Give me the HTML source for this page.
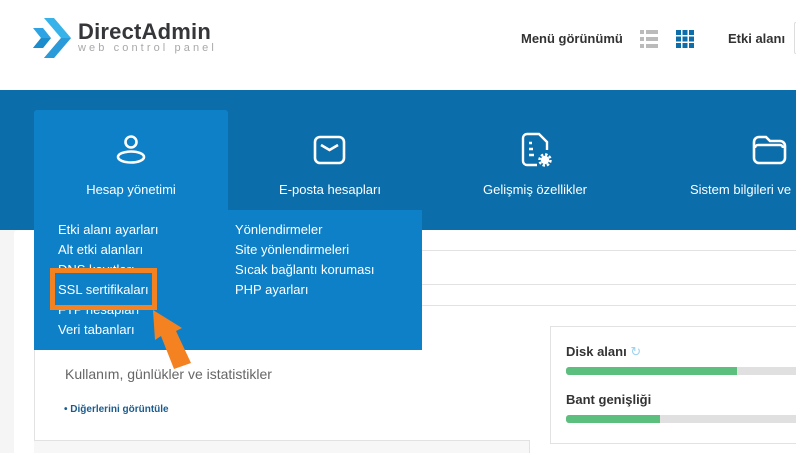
<!DOCTYPE html>
<html><head><meta charset="utf-8"><style>
*{margin:0;padding:0;box-sizing:border-box}
body{width:796px;height:453px;overflow:hidden;background:#f5f5f5;font-family:"Liberation Sans","DejaVu Sans",sans-serif;position:relative}
.abs{position:absolute}
.hdr{left:0;top:0;width:796px;height:90px;background:#fff}
.band{left:0;top:90px;width:796px;height:140px;background:#0b6daa}
.tab{left:34px;top:110px;width:194px;height:100px;background:#0d80c8;border-radius:3px 3px 0 0}
.drop{left:34px;top:210px;width:388px;height:140px;background:#0d80c8}
.lbl{color:#fff;font-size:13px;text-align:center}
.mi{color:#fff;font-size:13px;line-height:20px}
</style></head><body>
<div class="abs hdr"></div>
<svg class="abs" style="left:30px;top:16px" width="45" height="45" viewBox="0 0 45 45">
<polygon points="3,12 13,12 21,22 13,32 3,32 11,22" fill="#2ea3e3"/>
<polygon points="14,2 24,2 41,22 24,42 14,42 31,22" fill="#38b3ea"/>
<polygon points="11,22 21,22 13,32 3,32" fill="#1b8ccc"/>
<polygon points="31,22 41,22 24,42 14,42" fill="#2a9ad8"/>
</svg>
<div class="abs" style="left:78px;top:19px;font-size:22px;font-weight:bold;color:#35363a;letter-spacing:0.2px">DirectAdmin</div>
<div class="abs" style="left:78px;top:42px;font-size:11px;color:#a9a9a9;letter-spacing:3.1px">web control panel</div>
<div class="abs" style="left:521px;top:31px;font-size:13px;font-weight:bold;color:#333">Menü görünümü</div>
<svg class="abs" style="left:640px;top:30px" width="18" height="18"><g fill="#bbb"><rect x="0" y="0" width="4" height="4"/><rect x="6" y="0" width="12" height="4"/><rect x="0" y="7" width="4" height="4"/><rect x="6" y="7" width="12" height="4"/><rect x="0" y="14" width="4" height="4"/><rect x="6" y="14" width="12" height="4"/></g></svg>
<svg class="abs" style="left:676px;top:30px" width="18" height="18"><g fill="#0b6daa"><rect x="0" y="0" width="5" height="5"/><rect x="6.5" y="0" width="5" height="5"/><rect x="13" y="0" width="5" height="5"/><rect x="0" y="6.5" width="5" height="5"/><rect x="6.5" y="6.5" width="5" height="5"/><rect x="13" y="6.5" width="5" height="5"/><rect x="0" y="13" width="5" height="5"/><rect x="6.5" y="13" width="5" height="5"/><rect x="13" y="13" width="5" height="5"/></g></svg>
<div class="abs" style="left:728px;top:31px;font-size:13px;font-weight:bold;color:#333">Etki alanı</div>
<div class="abs" style="left:794px;top:22px;width:4px;height:32px;border:1px solid #ddd;border-radius:3px"></div>

<div class="abs band"></div>
<div class="abs tab"></div>
<svg class="abs" style="left:114px;top:132px" width="34" height="34" viewBox="0 0 34 34" fill="none" stroke="#fff" stroke-width="2.6"><circle cx="17" cy="10" r="5.5"/><ellipse cx="17" cy="25" rx="13" ry="5.5"/></svg>
<div class="abs lbl" style="left:34px;top:182px;width:194px">Hesap yönetimi</div>
<svg class="abs" style="left:312px;top:134px" width="36" height="32" viewBox="0 0 36 32" fill="none" stroke="#fff" stroke-width="2.6"><rect x="3" y="3" width="29" height="26" rx="5"/><path d="M9 11l8.5 5 8.5-5"/></svg>
<div class="abs lbl" style="left:230px;top:182px;width:200px">E-posta hesapları</div>
<svg class="abs" style="left:520px;top:132px" width="34" height="36" viewBox="0 0 34 36" fill="none" stroke="#fff" stroke-width="2.4"><path d="M17 33H7a4 4 0 0 1-4-4V6a4 4 0 0 1 4-4h12l8 8v8"/><path d="M9 11h3M9 17h4M9 23h5"/><circle cx="25" cy="28" r="3" fill="#fff"/><circle cx="25" cy="28" r="5.5" stroke-dasharray="2.5 1.8" stroke-width="2.5"/></svg>
<div class="abs lbl" style="left:435px;top:182px;width:200px">Gelişmiş özellikler</div>
<svg class="abs" style="left:751px;top:134px" width="36" height="32" viewBox="0 0 36 32" fill="none" stroke="#fff" stroke-width="2.6"><path d="M3 8a5 5 0 0 1 5-5h7l4 4h10a5 5 0 0 1 5 5v12a5 5 0 0 1-5 5H8a5 5 0 0 1-5-5z"/><path d="M4 14a3 3 0 0 1 3-3h22a3 3 0 0 1 3 3"/></svg>
<div class="abs lbl" style="left:690px;top:182px;width:120px;text-align:left">Sistem bilgileri ve</div>

<div class="abs" style="left:14px;top:230px;width:782px;height:223px;background:#fff;border-radius:4px 0 0 0"></div>
<div class="abs" style="left:367px;top:250px;width:429px;height:1px;background:#e2e2e2"></div>
<div class="abs" style="left:367px;top:284px;width:429px;height:1px;background:#e2e2e2"></div>
<div class="abs" style="left:422px;top:305px;width:374px;height:1px;background:#e2e2e2"></div>
<div class="abs" style="left:34px;top:340px;width:1px;height:113px;background:#e2e2e2"></div>
<div class="abs" style="left:34px;top:440px;width:496px;height:13px;background:#f7f7f7;border-top:1px solid #e2e2e2;border-right:1px solid #e2e2e2"></div>

<div class="abs drop"></div>
<div class="abs mi" style="left:58px;top:220px">Etki alanı ayarları<br>Alt etki alanları<br>DNS kayıtları<br>SSL sertifikaları<br>FTP hesapları<br>Veri tabanları</div>
<div class="abs mi" style="left:235px;top:220px">Yönlendirmeler<br>Site yönlendirmeleri<br>Sıcak bağlantı koruması<br>PHP ayarları</div>
<div class="abs" style="left:50px;top:268px;width:107px;height:42px;border:5px solid #f58220;background:#0d80c8"></div>
<div class="abs mi" style="left:58px;top:280px">SSL sertifikaları</div>
<svg class="abs" style="left:140px;top:300px" width="60" height="75"><polygon points="13,10 42,28 36,31 51,63 34,69 21,36 15,40" fill="#f58220"/></svg>

<div class="abs" style="left:65px;top:366px;font-size:14px;color:#666">Kullanım, günlükler ve istatistikler</div>
<div class="abs" style="left:64px;top:404px;font-size:10px;font-weight:bold;color:#1a5c8f">• Diğerlerini görüntüle</div>

<div class="abs" style="left:550px;top:326px;width:250px;height:118px;border:1px solid #e2e2e2;background:#fff"></div>
<div class="abs" style="left:566px;top:344px;font-size:13px;font-weight:bold;color:#333">Disk alanı <span style="color:#9fd3f0;font-weight:normal">↻</span></div>
<div class="abs" style="left:566px;top:367px;width:240px;height:8px;background:#e0e0e0;border-radius:3px"></div>
<div class="abs" style="left:566px;top:367px;width:171px;height:8px;background:#5cbf7e;border-radius:3px 0 0 3px"></div>
<div class="abs" style="left:566px;top:392px;font-size:13px;font-weight:bold;color:#333">Bant genişliği</div>
<div class="abs" style="left:566px;top:415px;width:240px;height:8px;background:#e0e0e0;border-radius:3px"></div>
<div class="abs" style="left:566px;top:415px;width:94px;height:8px;background:#5cbf7e;border-radius:3px 0 0 3px"></div>
</body></html>
